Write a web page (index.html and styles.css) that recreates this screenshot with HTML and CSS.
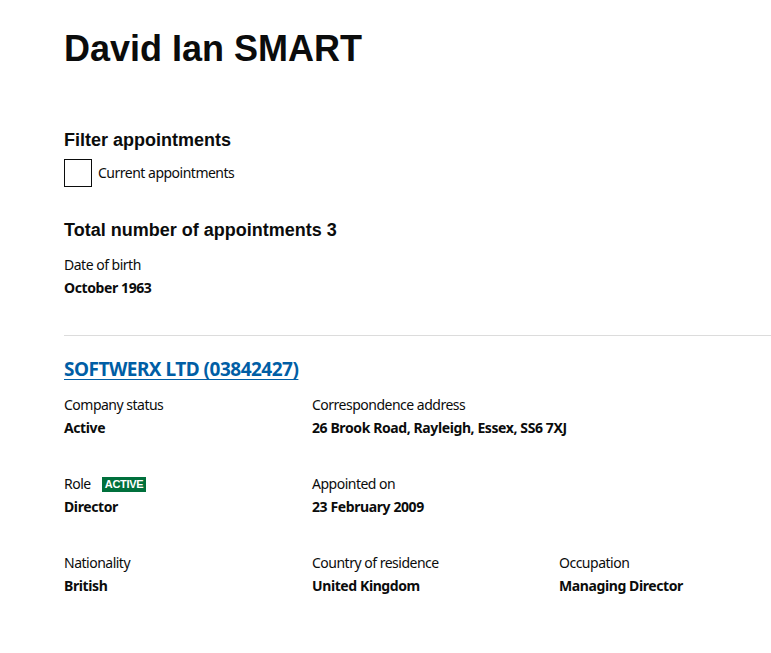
FILE: index.html
```html
<!DOCTYPE html>
<html lang="en">
<head>
    <meta charset="UTF-8">
    <meta name="viewport" content="width=device-width, initial-scale=1.0">
    <title>David Ian SMART - Appointments</title>
    <link rel="stylesheet" href="styles.css">
</head>
<body>
    <main class="page">
        <h1 class="officer-name">David Ian SMART</h1>

        <form class="filter">
            <h2 class="heading-medium">Filter appointments</h2>
            <label class="checkbox">
                <input type="checkbox" class="checkbox-input">
                <span class="checkbox-box"></span>
                <span class="checkbox-label">Current appointments</span>
            </label>
        </form>

        <h2 class="heading-medium total">Total number of appointments 3</h2>

        <dl class="summary">
            <dt>Date of birth</dt>
            <dd>October 1963</dd>
        </dl>

        <hr class="section-break">

        <!-- Appointment -->
        <div class="appointment">
            <h2 class="appointment-title">
                <a href="#" class="company-link">SOFTWERX LTD (03842427)</a>
            </h2>

            <div class="details">
                <dl class="detail">
                    <dt>Company status</dt>
                    <dd>Active</dd>
                </dl>
                <dl class="detail wide">
                    <dt>Correspondence address</dt>
                    <dd>26 Brook Road, Rayleigh, Essex, SS6 7XJ</dd>
                </dl>

                <dl class="detail">
                    <dt>Role <span class="status-tag">Active</span></dt>
                    <dd>Director</dd>
                </dl>
                <dl class="detail wide">
                    <dt>Appointed on</dt>
                    <dd>23 February 2009</dd>
                </dl>

                <dl class="detail">
                    <dt>Nationality</dt>
                    <dd>British</dd>
                </dl>
                <dl class="detail">
                    <dt>Country of residence</dt>
                    <dd>United Kingdom</dd>
                </dl>
                <dl class="detail">
                    <dt>Occupation</dt>
                    <dd>Managing Director</dd>
                </dl>
            </div>
        </div>
    </main>
</body>
</html>
```

FILE: styles.css
```css
body {
    margin: 0;
    background: #fff;
    color: #0b0c0c;
    font-family: 'Noto Sans', sans-serif;
    font-size: 14px;
    letter-spacing: -0.5px;
    overflow-x: hidden;
}

.page {
    padding: 29px 0 40px 64px;
}

.officer-name {
    margin: 0;
    font-family: 'Liberation Sans', Arial, sans-serif;
    font-size: 36px;
    line-height: 40px;
    font-weight: bold;
    letter-spacing: 0;
}

.heading-medium {
    margin: 0;
    font-family: 'Liberation Sans', Arial, sans-serif;
    font-size: 18px;
    line-height: 24px;
    font-weight: bold;
    letter-spacing: 0;
}

.filter {
    margin-top: 59px;
}

.checkbox {
    display: flex;
    align-items: center;
    gap: 6px;
    margin-top: 7px;
    cursor: pointer;
}

.checkbox-input {
    display: none;
}

.checkbox-box {
    width: 26px;
    height: 26px;
    border: 1px solid #0b0c0c;
}

.checkbox-label {
    line-height: 20px;
}

.total {
    margin-top: 31px;
}

.summary {
    margin: 13px 0 0;
}

dt {
    line-height: 20px;
}

dd {
    margin: 3px 0 0;
    line-height: 20px;
    font-weight: bold;
    letter-spacing: -0.4px;
}

.section-break {
    margin: 37px 0 0;
    border: 0;
    border-top: 1px solid #dcdcdc;
}

.appointment-title {
    margin: 21px 0 0;
    font-size: 19px;
    line-height: 24px;
}

.company-link {
    color: #005ea5;
    font-weight: bold;
    text-decoration: underline;
    text-underline-offset: 3px;
}

.details {
    display: grid;
    grid-template-columns: 248px 247px 247px;
    row-gap: 36px;
    margin-top: 14px;
}

.detail {
    margin: 0;
}

.detail.wide {
    grid-column: span 2;
}

.status-tag {
    display: inline-block;
    margin-left: 8px;
    padding: 0 3px;
    background: #00703c;
    color: #fff;
    font-family: 'Liberation Sans', Arial, sans-serif;
    font-size: 11px;
    line-height: 15px;
    font-weight: bold;
    letter-spacing: -0.3px;
    text-transform: uppercase;
    vertical-align: 1px;
}
```
